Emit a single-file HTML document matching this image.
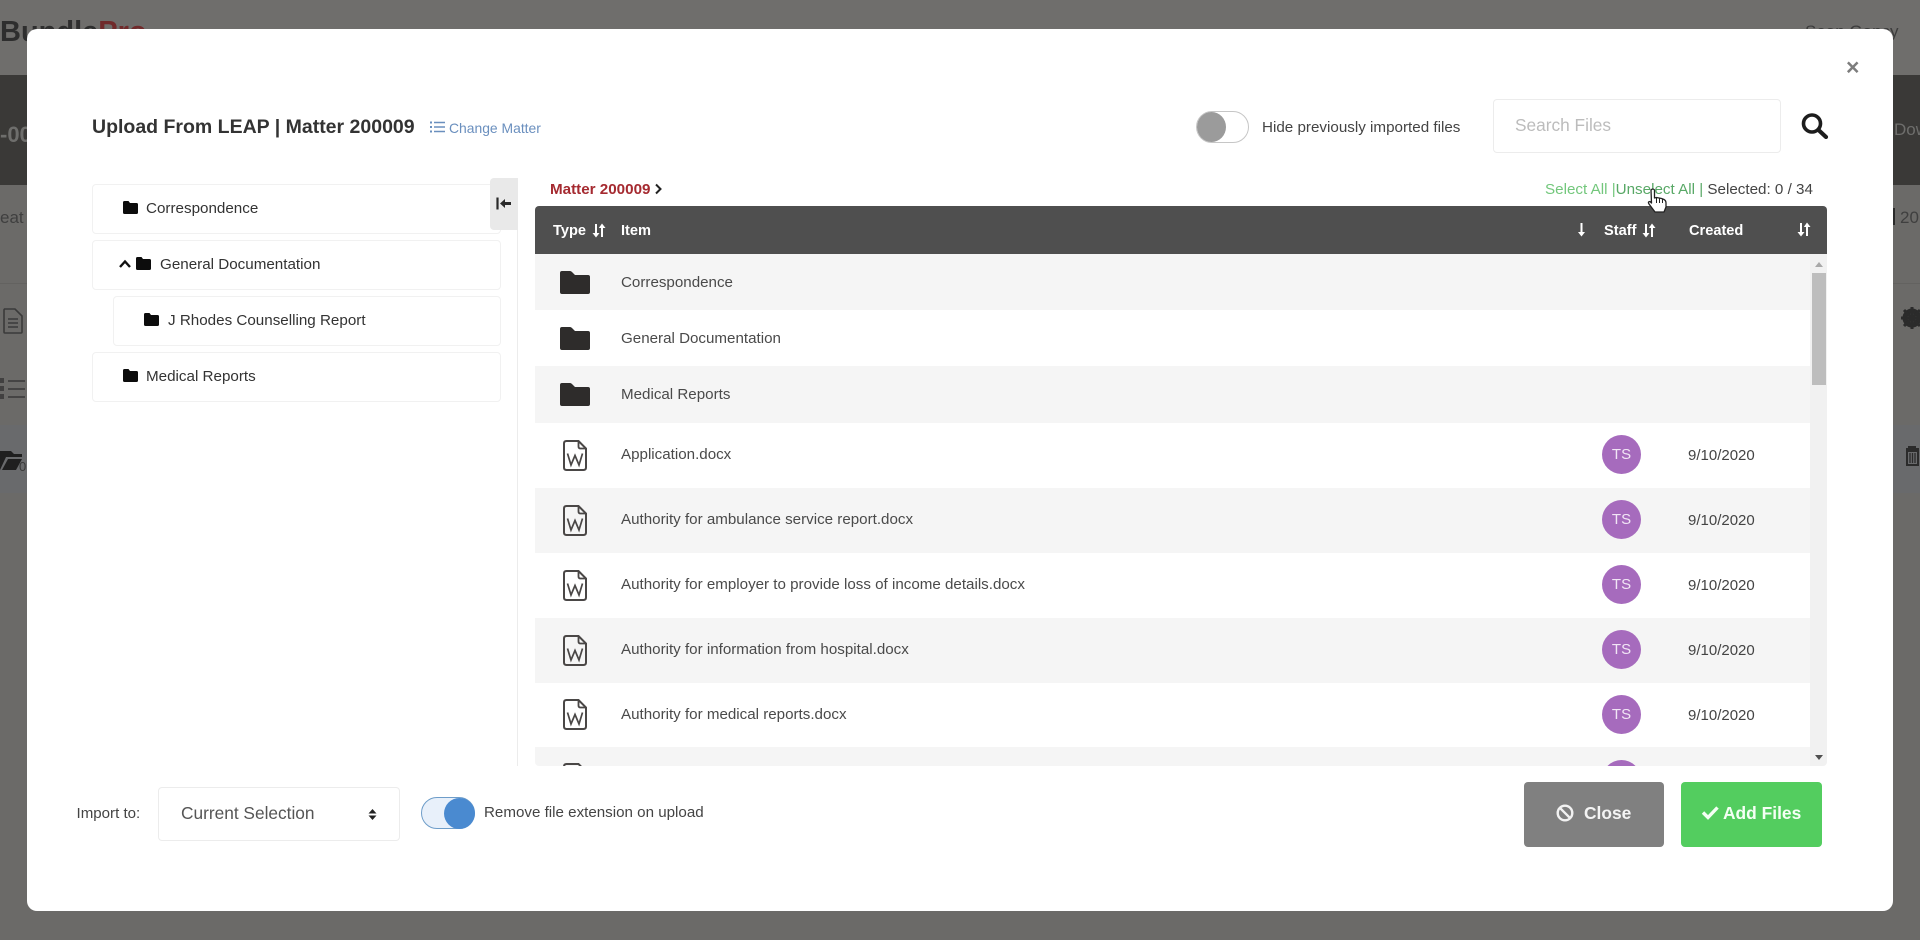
<!DOCTYPE html>
<html><head><meta charset="utf-8"><title>Upload From LEAP</title>
<style>
*{box-sizing:border-box}
html,body{margin:0;padding:0;width:1920px;height:940px;overflow:hidden;background:#6b6a68;font-family:"Liberation Sans",Arial,sans-serif}
body{filter:blur(.35px)}
.a{position:absolute;white-space:nowrap}
.tree{position:absolute;left:92px;width:409px;height:50px;border:1px solid #f1f1f1;border-radius:4px;background:#fff}
.tl{position:absolute;font-size:15.2px;color:#333;line-height:20px;white-space:nowrap}
.rt{position:absolute;left:621px;font-size:15.15px;color:#4a4a4a;line-height:20px;white-space:nowrap}
.av{position:absolute;left:1602px;width:39px;height:39px;border-radius:50%;background:#a66bbd;color:#f1e6f5;font-size:15px;line-height:40px;text-align:center}
.dt{position:absolute;left:1688px;font-size:15px;color:#444;line-height:20px}
.th{position:absolute;top:221px;font-size:14.6px;line-height:20px;font-weight:bold;color:#fff;white-space:nowrap}
</style></head>
<body>
<!-- background page behind the overlay -->
<div class="a" style="left:0;top:0;width:1920px;height:75px;background:#6f6e6c"></div>
<div class="a" style="left:0;top:12px;font-size:29px;font-weight:bold;color:#2e2e2e;line-height:40px">Bundle<span style="color:#702a2b">Pro</span></div>
<div class="a" style="left:1805px;top:22px;font-size:17px;color:#3c3c3c;line-height:20px">Sean Gancy</div>
<div class="a" style="left:0;top:75px;width:1920px;height:110px;background:#3a3937"></div>
<div class="a" style="left:0;top:122px;font-size:22px;font-weight:bold;color:#6e6e6c;line-height:26px">-00</div>
<div class="a" style="left:1894px;top:120px;font-size:17px;color:#6e6e6c;line-height:20px">Dow</div>
<div class="a" style="left:0;top:207px;font-size:17px;color:#3f3f3f;line-height:22px">eat</div>
<div class="a" style="left:1890px;top:208px;width:5px;height:17px;background:#2a2a2a"></div>
<div class="a" style="left:1900px;top:207px;font-size:17px;color:#3f3f3f;line-height:22px">20</div>
<div class="a" style="left:0;top:283px;width:1920px;height:1px;background:#636260"></div>
<div class="a" style="left:0;top:425px;width:1920px;height:68px;background:#696a6c"></div>
<svg class="a" style="left:0;top:300px" width="28" height="200" viewBox="0 0 28 200" fill="none">
<path d="M4 9H15L22 16V32Q22 33 21 33H5Q4 33 4 32V10Q4 9 5 9ZM8 19H18M8 23H18M8 27H18" stroke="#3a3a3a" stroke-width="1.600"/>
<path d="M8 81H25M8 89H25M8 97H25" stroke="#2f2f2f" stroke-width="1.300"/>
<path d="M0 78H4V83H0ZM0 86H4V91H0ZM0 94H4V99H0Z" fill="#2f2f2f" opacity=".7"/>
<path d="M0 151H11L14 154H22V157H6L0 170Z" fill="#1f1f1f"/><path d="M8 159H22L16 170H2Z" fill="#1f1f1f"/>
</svg>
<div class="a" style="left:19px;top:459px;font-size:13px;color:#3a3a3a;line-height:16px">0</div>
<svg class="a" style="left:1900px;top:304px" width="20" height="30" viewBox="0 0 20 30"><circle cx="12" cy="14" r="7" fill="none" stroke="#2b2b2b" stroke-width="5"/><path d="M12 3V25M1 14H23M4 6L20 22M20 6L4 22" stroke="#2b2b2b" stroke-width="3"/></svg>
<svg class="a" style="left:1904px;top:445px" width="16" height="22" viewBox="0 0 16 22"><path d="M2 4H15M5 4V2H11V4M3 6H14V20H3Z" fill="none" stroke="#2b2b2b" stroke-width="2"/><path d="M6 8V18M8.500 8V18M11 8V18" stroke="#2b2b2b" stroke-width="1.300"/></svg>

<!-- modal -->
<div class="a" style="left:27px;top:29px;width:1866px;height:882px;background:#fff;border-radius:10px"></div>

<div class="a" style="left:1846px;top:54px;font-size:23px;font-weight:bold;color:#7d7d7d;line-height:26px">×</div>

<div class="a" style="left:92px;top:116px;font-size:19.500px;font-weight:bold;color:#333;line-height:22px">Upload From LEAP | Matter 200009</div>
<svg class="a" style="left:430px;top:120px" width="15" height="14" viewBox="0 0 15 14"><path d="M0 2.500H2M0 7H2M0 11.500H2" stroke="#6a8fbe" stroke-width="2"/><path d="M4 2.500H15M4 7H15M4 11.500H15" stroke="#6a8fbe" stroke-width="1.500"/></svg>
<div class="a" style="left:449px;top:117.500px;font-size:13.900px;color:#6a8fbe;line-height:20px">Change Matter</div>

<!-- hide toggle -->
<div class="a" style="left:1196px;top:111px;width:53px;height:32px;border:1.500px solid #c6c6c6;border-radius:16px;background:#fff"></div>
<div class="a" style="left:1197px;top:112px;width:29px;height:30px;border-radius:50%;background:#9b9b9b"></div>
<div class="a" style="left:1262px;top:118px;font-size:15.200px;color:#444;line-height:20px">Hide previously imported files</div>
<div class="a" style="left:1493px;top:99px;width:288px;height:54px;border:1px solid #ececec;border-radius:4px"></div>
<div class="a" style="left:1515px;top:115px;font-size:17.300px;color:#bcbcbc;line-height:20px">Search Files</div>
<svg class="a" style="left:1800px;top:112px" width="29" height="27" viewBox="0 0 29 27" fill="none"><circle cx="12" cy="11.500" r="8.500" stroke="#1d1d1d" stroke-width="3.600"/><path d="M18.500 18L26 25" stroke="#1d1d1d" stroke-width="4.200" stroke-linecap="round"/></svg>

<!-- tree -->
<div class="a" style="left:517px;top:178px;width:1px;height:588px;background:#ececec"></div>
<div class="tree" style="top:184px"></div>
<div class="tree" style="top:240px"></div>
<div class="tree" style="top:296px;left:113px;width:388px"></div>
<div class="tree" style="top:352px"></div>
<div class="a" style="left:490px;top:178px;width:28px;height:52px;background:#e9e9e9;border-radius:4px 0 0 4px"></div>
<svg class="a" style="left:496px;top:196px" width="16" height="16" viewBox="0 0 16 16"><path d="M1.500 1.500V13.500" stroke="#2a2a2a" stroke-width="2.200"/><path d="M4 7.500L9 3V6H15V9H9V12Z" fill="#2a2a2a"/></svg>

<svg class="a" style="left:123px;top:201px" width="15" height="13" viewBox="0 0 15 13"><path d="M0 1.500Q0 0 1.500 0H5.500L7 2H13.500Q15 2 15 3.500V11.500Q15 13 13.500 13H1.500Q0 13 0 11.500Z" fill="#0c0c0c"/></svg>
<div class="tl" style="left:146px;top:199px">Correspondence</div>
<svg class="a" style="left:118px;top:258px" width="14" height="11" viewBox="0 0 14 11" fill="none"><path d="M2 9L7 3.500L12 9" stroke="#111" stroke-width="2.400"/></svg>
<svg class="a" style="left:136px;top:257px" width="15" height="13" viewBox="0 0 15 13"><path d="M0 1.500Q0 0 1.500 0H5.500L7 2H13.500Q15 2 15 3.500V11.500Q15 13 13.500 13H1.500Q0 13 0 11.500Z" fill="#0c0c0c"/></svg>
<div class="tl" style="left:160px;top:255px">General Documentation</div>
<svg class="a" style="left:144px;top:313px" width="15" height="13" viewBox="0 0 15 13"><path d="M0 1.500Q0 0 1.500 0H5.500L7 2H13.500Q15 2 15 3.500V11.500Q15 13 13.500 13H1.500Q0 13 0 11.500Z" fill="#0c0c0c"/></svg>
<div class="tl" style="left:168px;top:311px">J Rhodes Counselling Report</div>
<svg class="a" style="left:123px;top:369px" width="15" height="13" viewBox="0 0 15 13"><path d="M0 1.500Q0 0 1.500 0H5.500L7 2H13.500Q15 2 15 3.500V11.500Q15 13 13.500 13H1.500Q0 13 0 11.500Z" fill="#0c0c0c"/></svg>
<div class="tl" style="left:146px;top:367px">Medical Reports</div>

<!-- breadcrumbs -->
<div class="a" style="left:550px;top:180px;font-size:15.200px;font-weight:bold;color:#a52a30;line-height:20px">Matter 200009</div>
<svg class="a" style="left:654px;top:183px" width="9" height="12" viewBox="0 0 9 12" fill="none"><path d="M2 1.500L6.500 6L2 10.500" stroke="#222" stroke-width="2"/></svg>
<div class="a" style="left:1545px;top:180px;font-size:15.200px;line-height:20px;color:#444"><span style="color:#73c77c">Select All |</span><span style="color:#58a866">Unselect All |</span> Selected: 0 / 34</div>

<!-- table -->
<div class="a" style="left:535px;top:206px;width:1292px;height:560px;background:#fff;border-radius:4px;overflow:hidden">
  <div class="a" style="left:0;top:0;width:1292px;height:48px;background:#4f4f4f"></div>
  <div class="a" style="left:0;top:48px;width:1275px;height:56px;background:#f5f5f5"></div>
  <div class="a" style="left:0;top:160px;width:1275px;height:57px;background:#f5f5f5"></div>
  <div class="a" style="left:0;top:282px;width:1275px;height:65px;background:#f5f5f5"></div>
  <div class="a" style="left:0;top:412px;width:1275px;height:65px;background:#f5f5f5"></div>
  <div class="a" style="left:0;top:541px;width:1275px;height:19px;background:#f5f5f5"></div>
  <div class="a" style="left:1275px;top:48px;width:17px;height:512px;background:#f1f1f1"></div>
  <div class="a" style="left:1277px;top:67px;width:14px;height:112px;background:#bdbdbd"></div>
  <div class="a" style="left:1280px;top:56px;width:0;height:0;border-left:4px solid transparent;border-right:4px solid transparent;border-bottom:5px solid #a8a8a8"></div>
  <div class="a" style="left:1280px;top:549px;width:0;height:0;border-left:4px solid transparent;border-right:4px solid transparent;border-top:5px solid #505050"></div>
</div>

<div class="th" style="left:553px">Type</div>
<svg class="a" style="left:592px;top:223px" width="14" height="15" viewBox="0 0 14 15" fill="#fff"><path d="M3 1H5V10H7.500L4 14.500L.5 10H3Z"/><path d="M9 14V5H6.800L10 .5L13.500 5H11V14Z"/></svg>
<div class="th" style="left:621px">Item</div>
<svg class="a" style="left:1577px;top:222px" width="9" height="15" viewBox="0 0 9 15" fill="#fff"><path d="M3.500 1H5.500V10H8L4.500 14.500L1 10H3.500Z"/></svg>
<div class="th" style="left:1604px">Staff</div>
<svg class="a" style="left:1642px;top:223px" width="14" height="15" viewBox="0 0 14 15" fill="#fff"><path d="M3 1H5V10H7.500L4 14.500L.5 10H3Z"/><path d="M9 14V5H6.800L10 .5L13.500 5H11V14Z"/></svg>
<div class="th" style="left:1689px">Created</div>
<svg class="a" style="left:1797px;top:222px" width="14" height="15" viewBox="0 0 14 15" fill="#fff"><path d="M3 1H5V10H7.500L4 14.500L.5 10H3Z"/><path d="M9 14V5H6.800L10 .5L13.500 5H11V14Z"/></svg>

<!-- folders -->
<svg class="a" style="left:560px;top:271px" width="30" height="23" viewBox="0 0 30 23"><path d="M0 2Q0 0 2 0H10Q11 0 12 1L15 4H28Q30 4 30 6V21Q30 23 28 23H2Q0 23 0 21Z" fill="#2e2c2b"/></svg>
<div class="rt" style="top:272.500px">Correspondence</div>
<svg class="a" style="left:560px;top:327px" width="30" height="23" viewBox="0 0 30 23"><path d="M0 2Q0 0 2 0H10Q11 0 12 1L15 4H28Q30 4 30 6V21Q30 23 28 23H2Q0 23 0 21Z" fill="#2e2c2b"/></svg>
<div class="rt" style="top:328.500px">General Documentation</div>
<svg class="a" style="left:560px;top:383px" width="30" height="23" viewBox="0 0 30 23"><path d="M0 2Q0 0 2 0H10Q11 0 12 1L15 4H28Q30 4 30 6V21Q30 23 28 23H2Q0 23 0 21Z" fill="#2e2c2b"/></svg>
<div class="rt" style="top:384.500px">Medical Reports</div>

<!-- files -->
<svg class="a" style="left:563px;top:440px" width="24" height="31" viewBox="0 0 24 31" fill="none"><path d="M3.500 1H15.500L23 8.500V27.500Q23 30 20.500 30H3.500Q1 30 1 27.500V3.500Q1 1 3.500 1Z" stroke="#4a4746" stroke-width="2"/><path d="M15.500 1V6.500Q15.500 8.500 17.500 8.500H23" stroke="#4a4746" stroke-width="1.800"/><path d="M4.500 13.500L8 25L12 15.500L16 25L19.500 13.500" stroke="#4a4746" stroke-width="1.700"/></svg>
<div class="rt" style="top:445px">Application.docx</div>
<div class="av" style="top:435px">TS</div><div class="dt" style="top:445.500px">9/10/2020</div>

<svg class="a" style="left:563px;top:505px" width="24" height="31" viewBox="0 0 24 31" fill="none"><path d="M3.500 1H15.500L23 8.500V27.500Q23 30 20.500 30H3.500Q1 30 1 27.500V3.500Q1 1 3.500 1Z" stroke="#4a4746" stroke-width="2"/><path d="M15.500 1V6.500Q15.500 8.500 17.500 8.500H23" stroke="#4a4746" stroke-width="1.800"/><path d="M4.500 13.500L8 25L12 15.500L16 25L19.500 13.500" stroke="#4a4746" stroke-width="1.700"/></svg>
<div class="rt" style="top:510px">Authority for ambulance service report.docx</div>
<div class="av" style="top:500px">TS</div><div class="dt" style="top:510.500px">9/10/2020</div>

<svg class="a" style="left:563px;top:570px" width="24" height="31" viewBox="0 0 24 31" fill="none"><path d="M3.500 1H15.500L23 8.500V27.500Q23 30 20.500 30H3.500Q1 30 1 27.500V3.500Q1 1 3.500 1Z" stroke="#4a4746" stroke-width="2"/><path d="M15.500 1V6.500Q15.500 8.500 17.500 8.500H23" stroke="#4a4746" stroke-width="1.800"/><path d="M4.500 13.500L8 25L12 15.500L16 25L19.500 13.500" stroke="#4a4746" stroke-width="1.700"/></svg>
<div class="rt" style="top:575px">Authority for employer to provide loss of income details.docx</div>
<div class="av" style="top:565px">TS</div><div class="dt" style="top:575.500px">9/10/2020</div>

<svg class="a" style="left:563px;top:635px" width="24" height="31" viewBox="0 0 24 31" fill="none"><path d="M3.500 1H15.500L23 8.500V27.500Q23 30 20.500 30H3.500Q1 30 1 27.500V3.500Q1 1 3.500 1Z" stroke="#4a4746" stroke-width="2"/><path d="M15.500 1V6.500Q15.500 8.500 17.500 8.500H23" stroke="#4a4746" stroke-width="1.800"/><path d="M4.500 13.500L8 25L12 15.500L16 25L19.500 13.500" stroke="#4a4746" stroke-width="1.700"/></svg>
<div class="rt" style="top:640px">Authority for information from hospital.docx</div>
<div class="av" style="top:630px">TS</div><div class="dt" style="top:640.500px">9/10/2020</div>

<svg class="a" style="left:563px;top:699px" width="24" height="31" viewBox="0 0 24 31" fill="none"><path d="M3.500 1H15.500L23 8.500V27.500Q23 30 20.500 30H3.500Q1 30 1 27.500V3.500Q1 1 3.500 1Z" stroke="#4a4746" stroke-width="2"/><path d="M15.500 1V6.500Q15.500 8.500 17.500 8.500H23" stroke="#4a4746" stroke-width="1.800"/><path d="M4.500 13.500L8 25L12 15.500L16 25L19.500 13.500" stroke="#4a4746" stroke-width="1.700"/></svg>
<div class="rt" style="top:705px">Authority for medical reports.docx</div>
<div class="av" style="top:695px">TS</div><div class="dt" style="top:705.500px">9/10/2020</div>

<div class="a" style="left:535px;top:747px;width:1275px;height:19px;overflow:hidden">
  <svg class="a" style="left:28px;top:16px" width="24" height="31" viewBox="0 0 24 31" fill="none"><path d="M3.500 1H15.500L23 8.500V27.500Q23 30 20.500 30H3.500Q1 30 1 27.500V3.500Q1 1 3.500 1Z" stroke="#4a4746" stroke-width="2"/></svg>
  <div class="av" style="left:1067px;top:13px"></div>
</div>

<!-- cursor -->
<svg class="a" style="left:1646px;top:188px" width="22" height="26" viewBox="0 0 22 26"><path d="M5 2Q7 0 8.500 2V10L10.500 9.500L13 10L15.500 10.500L18 11.500Q20 12.500 20 15V19L18 24H9L3 16Q1.500 13.500 4 13.500L5.500 15Z" fill="#fff" stroke="#222" stroke-width="1.300" stroke-linejoin="round"/><path d="M10.500 10V15M13.500 10.500V15M16.500 11V15" stroke="#222" stroke-width="1"/></svg>

<!-- bottom -->
<div class="a" style="left:76.500px;top:804px;font-size:15.100px;color:#444;line-height:20px">Import to:</div>
<div class="a" style="left:158px;top:787px;width:242px;height:54px;border:1px solid #ececec;border-radius:4px"></div>
<div class="a" style="left:181px;top:803px;font-size:17.300px;color:#555;line-height:20px">Current Selection</div>
<svg class="a" style="left:368px;top:808px" width="9" height="13" viewBox="0 0 9 13" fill="#222"><path d="M4.500 1L8.500 5.500H.5ZM.5 7.500H8.500L4.500 12Z"/></svg>
<div class="a" style="left:421px;top:797px;width:54px;height:32px;border:1.500px solid #6e9dc9;border-radius:16px;background:#e8f0fa"></div>
<div class="a" style="left:444px;top:798px;width:31px;height:31px;border-radius:50%;background:#4a8ad0"></div>
<div class="a" style="left:484px;top:803px;font-size:15.150px;color:#444;line-height:20px">Remove file extension on upload</div>

<div class="a" style="left:1524px;top:782px;width:140px;height:65px;background:#808080;border-radius:4px"></div>
<svg class="a" style="left:1556px;top:804px" width="18" height="18" viewBox="0 0 18 18" fill="none"><circle cx="9" cy="9" r="7.300" stroke="#f2f2f2" stroke-width="2.400"/><path d="M3.800 3.800L14.200 14.200" stroke="#f2f2f2" stroke-width="2.400"/></svg>
<div class="a" style="left:1584px;top:803px;font-size:17.400px;font-weight:bold;color:#f4f4f4;line-height:20px">Close</div>
<div class="a" style="left:1681px;top:782px;width:141px;height:65px;background:#53cd5f;border-radius:4px"></div>
<svg class="a" style="left:1701px;top:805px" width="18" height="15" viewBox="0 0 18 15" fill="none"><path d="M2 7.500L7 12.500L16.500 2.500" stroke="#f4fff4" stroke-width="3.400"/></svg>
<div class="a" style="left:1723px;top:803px;font-size:17.400px;font-weight:bold;color:#f4fff4;line-height:20px">Add Files</div>
</body></html>
